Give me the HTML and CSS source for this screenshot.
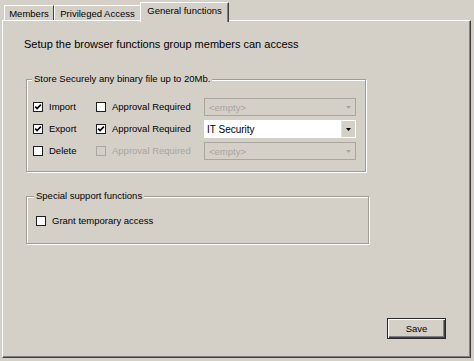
FILE: index.html
```html
<!DOCTYPE html>
<html>
<head>
<meta charset="utf-8">
<title>General functions</title>
<link rel="stylesheet" href="styles.css">
</head>
<body>
<div class="window">
  <div class="tabs">
    <div class="tab tab-members">Members</div>
    <div class="tab tab-priv">Privileged Access</div>
    <div class="tab tab-general active">General functions</div>
  </div>
  <div class="panel">
    <p class="intro">Setup the browser functions group members can access</p>

    <fieldset class="group group-store">
      <legend>Store Securely any binary file up to 20Mb.</legend>
      <div class="grid">
        <label class="cb"><span class="box"><svg viewBox="0 0 8 8" width="8" height="8"><polyline points="1.2,3.6 3.1,5.6 6.9,1.6" fill="none" stroke="#000" stroke-width="1.6"/></svg></span>Import</label>
        <label class="cb"><span class="box"></span>Approval Required</label>
        <div class="combo disabled"><span class="val">&lt;empty&gt;</span><span class="arrow"><svg viewBox="0 0 5 3" width="5" height="3"><polygon points="0,0 5,0 2.5,3" fill="#a8a5a0"/></svg></span></div>

        <label class="cb"><span class="box"><svg viewBox="0 0 8 8" width="8" height="8"><polyline points="1.2,3.6 3.1,5.6 6.9,1.6" fill="none" stroke="#000" stroke-width="1.6"/></svg></span>Export</label>
        <label class="cb"><span class="box"><svg viewBox="0 0 8 8" width="8" height="8"><polyline points="1.2,3.6 3.1,5.6 6.9,1.6" fill="none" stroke="#000" stroke-width="1.6"/></svg></span>Approval Required</label>
        <div class="combo enabled"><span class="val">IT Security</span><span class="arrow"><svg viewBox="0 0 5 3" width="5" height="3"><polygon points="0,0 5,0 2.5,3" fill="#000"/></svg></span></div>

        <label class="cb"><span class="box"></span>Delete</label>
        <label class="cb off"><span class="box"></span>Approval Required</label>
        <div class="combo disabled"><span class="val">&lt;empty&gt;</span><span class="arrow"><svg viewBox="0 0 5 3" width="5" height="3"><polygon points="0,0 5,0 2.5,3" fill="#a8a5a0"/></svg></span></div>
      </div>
    </fieldset>

    <fieldset class="group group-special">
      <legend>Special support functions</legend>
      <div class="row">
        <label class="cb"><span class="box"></span>Grant temporary access</label>
      </div>
    </fieldset>

    <div class="actions">
      <button class="save" type="button">Save</button>
    </div>
  </div>
</div>
</body>
</html>
```

FILE: styles.css
```css
html, body {
  margin: 0;
  padding: 0;
  background: #d4d0c8;
}

body {
  font-family: "Liberation Sans", Arial, sans-serif;
  font-size: 9.5px;
  color: #000;
}

.window {
  width: 474px;
  height: 361px;
  overflow: hidden;
}

/* ---------- tabs ---------- */
.tabs {
  display: flex;
  align-items: flex-end;
  height: 20px;
  padding-left: 4px;
}

.tab {
  box-sizing: border-box;
  height: 15px;
  padding-top: 2px;
  line-height: 12px;
  text-align: center;
  white-space: nowrap;
  background: #d4d0c8;
  border-top: 1px solid #fff;
  border-left: 1px solid #fff;
  border-right: 1px solid #404040;
}

.tab-members { width: 50px; }
.tab-priv { width: 86px; border-right: none; }

.tab.active {
  width: 89px;
  height: 20px;
  margin-bottom: -2px;
  position: relative;
  z-index: 2;
  border-right: 1px solid #404040;
  box-shadow: inset -1px 0 0 #808080;
}

/* ---------- panel ---------- */
.panel {
  box-sizing: border-box;
  width: 469px;
  height: 338px;
  margin-left: 2px;
  border-top: 1px solid #fff;
  border-left: 1px solid #fff;
  border-right: 1px solid #404040;
  border-bottom: 1px solid #404040;
  box-shadow: inset -1px -1px 0 #808080;
  padding: 17px 24px 18px 21px;
  display: flex;
  flex-direction: column;
  align-items: flex-start;
}

.intro {
  margin: 0;
  font-size: 11px;
  line-height: 13px;
  white-space: nowrap;
}

/* ---------- group boxes ---------- */
.group {
  box-sizing: border-box;
  margin: 0 0 0 2px;
  border: 1px solid #a09c94;
  box-shadow: inset 1px 1px 0 #fff, 1px 1px 0 #fff;
  min-width: 0;
}

.group legend {
  padding: 0 2px;
  line-height: 12px;
  background: #d4d0c8;
  white-space: nowrap;
}

.group-store {
  width: 340px;
  margin-top: 22px;
  padding: 11px 6px 9px 6px;
}
.group-store legend { margin-left: -1px; }

.group-special {
  width: 343px;
  margin-top: 18px;
  padding: 8px 9px 11px 9px;
}
.group-special legend { margin-left: -2px; }

.grid {
  display: grid;
  grid-template-columns: 63px 108px 152px;
  grid-auto-rows: 22px;
  align-items: center;
}

.row {
  height: 22px;
  display: flex;
  align-items: center;
}

/* ---------- checkboxes ---------- */
.cb {
  display: flex;
  align-items: center;
  gap: 6px;
  line-height: 12px;
  white-space: nowrap;
}

.box {
  box-sizing: border-box;
  width: 10px;
  height: 10px;
  border: 1px solid #1e1e1e;
  background: #fff;
  display: flex;
  align-items: center;
  justify-content: center;
  flex: none;
}

.box svg { display: block; }

.cb.off { color: #a7a49e; }
.cb.off .box {
  border-color: #aaa7a1;
  background: #d4d0c8;
}

/* ---------- combo boxes ---------- */
.combo {
  box-sizing: border-box;
  width: 152px;
  height: 18px;
  display: flex;
  align-items: stretch;
}

.combo .val {
  flex: 1;
  display: flex;
  align-items: center;
  padding-left: 4px;
  white-space: nowrap;
}

.combo .arrow {
  width: 13px;
  display: flex;
  align-items: center;
  justify-content: center;
}

.combo.disabled {
  border: 1px solid #a9a6a0;
  color: #a7a49e;
}

.combo.enabled {
  background: #fff;
  font-size: 10px;
}
.combo.enabled .val { padding-left: 3px; }
.combo.enabled .arrow {
  background: #d4d0c8;
  border: 1px solid #fff;
  border-left-color: #e4e1db;
}

/* ---------- actions ---------- */
.actions {
  margin-top: auto;
  align-self: stretch;
  display: flex;
  justify-content: flex-end;
}

.save {
  box-sizing: border-box;
  width: 59px;
  height: 21px;
  margin: 0;
  padding: 0;
  font-family: "Liberation Sans", Arial, sans-serif;
  font-size: 9.5px;
  color: #000;
  background: #d4d0c8;
  border: 1px solid #2a2a2a;
  border-radius: 0;
  box-shadow: inset 1px 1px 0 #fff, inset -1px -1px 0 #404040, inset -2px -2px 0 #808080;
}
```
